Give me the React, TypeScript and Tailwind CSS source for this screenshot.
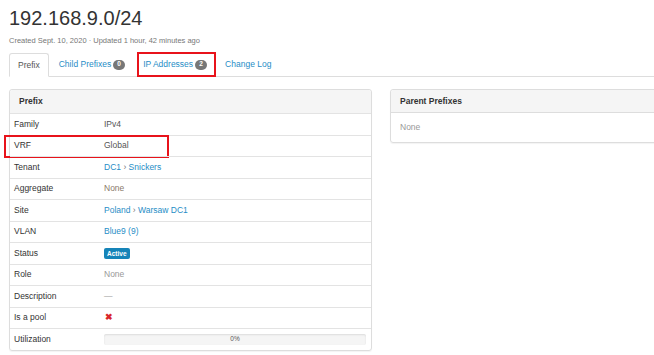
import React from 'react'

const link = 'text-[#1f8dc6]'

function Badge({ n }: { n: number }) {
    return (
        <span className="ml-[2px] inline-flex h-[10px] min-w-[12px] items-center justify-center rounded-full bg-[#777] px-[3px] text-[6.5px] font-bold leading-none text-white">
            {n}
        </span>
    )
}

function Row({ label, children, mark }: { label: string; children: React.ReactNode; mark?: boolean }) {
    return (
        <div className="relative flex h-[21.5px] items-center border-t border-[#e3e3e3] text-[8.5px]">
            <div className="w-[94px] pl-[4px] text-[#333]">{label}</div>
            <div className="flex-1 pr-[5px]">{children}</div>
            {mark && (
                <div className="absolute left-[-6px] top-[-1px] h-[23px] w-[165px] border-2 border-[#e8131b]" />
            )}
        </div>
    )
}

export default function App() {
    return (
        <div className="h-[355px] w-[654px] overflow-hidden bg-white font-['Liberation_Sans',Arial,sans-serif] text-[#333]">
            <div className="w-[760px] pl-[9px]">
                <h1 className="pt-[7px] text-[20px] leading-[22px] text-[#333]">192.168.9.0/24</h1>
                <p className="mt-[7px] text-[7.5px] leading-[9px] text-[#777]">
                    Created Sept. 10, 2020 · Updated 1 hour, 42 minutes ago
                </p>

                <div className="mt-[8px] flex h-[24px] border-b border-[#ddd] text-[8.5px]">
                    <div className="mb-[-1px] flex items-center rounded-t-[3px] border border-b-white border-[#ddd] bg-white px-[8px] text-[#555]">
                        Prefix
                    </div>
                    <div className={`ml-[1px] flex items-center border border-transparent px-[8px] ${link}`}>
                        Child Prefixes <Badge n={0} />
                    </div>
                    <div className={`relative flex items-center border border-transparent px-[8px] ${link}`}>
                        IP Addresses <Badge n={2} />
                        <div className="absolute left-[2px] top-[-2px] h-[25px] right-[-1px] border-2 border-[#e8131b]" />
                    </div>
                    <div className={`flex items-center border border-transparent px-[8px] ${link}`}>Change Log</div>
                </div>

                <div className="mt-[12px] flex items-start gap-[18px]">
                    <div className="w-[363px] shrink-0 rounded-[3px] border border-[#ddd] shadow-[0_1px_1px_rgba(0,0,0,0.05)]">
                        <div className="flex h-[23px] items-center rounded-t-[3px] bg-[#f5f5f5] pl-[9px] text-[8.5px] font-bold text-[#333]">
                            Prefix
                        </div>
                        <Row label="Family">
                            <span className="text-[#555]">IPv4</span>
                        </Row>
                        <Row label="VRF" mark>
                            <span className="text-[#555]">Global</span>
                        </Row>
                        <Row label="Tenant">
                            <span className={link}>DC1</span> <span className="text-[#777]">›</span>{' '}
                            <span className={link}>Snickers</span>
                        </Row>
                        <Row label="Aggregate">
                            <span className="text-[#8a7a6a]">None</span>
                        </Row>
                        <Row label="Site">
                            <span className={link}>Poland</span> <span className="text-[#777]">›</span>{' '}
                            <span className={link}>Warsaw DC1</span>
                        </Row>
                        <Row label="VLAN">
                            <span className={link}>Blue9 (9)</span>
                        </Row>
                        <Row label="Status">
                            <span className="inline-flex h-[11px] items-center rounded-[2px] bg-[#1684b8] px-[3px] text-[6.5px] font-bold text-white">
                                Active
                            </span>
                        </Row>
                        <Row label="Role">
                            <span className="text-[#999]">None</span>
                        </Row>
                        <Row label="Description">
                            <span className="text-[#999]">—</span>
                        </Row>
                        <Row label="Is a pool">
                            <span className="pl-[1px] text-[9px] font-bold text-[#d9262b]">✖</span>
                        </Row>
                        <Row label="Utilization">
                            <div className="flex h-[11px] items-center justify-center rounded-[2px] bg-[#f5f5f5] text-[6.5px] text-[#555] shadow-[inset_0_1px_2px_rgba(0,0,0,0.1)]">
                                0%
                            </div>
                        </Row>
                    </div>

                    <div className="w-[363px] shrink-0 rounded-[3px] border border-[#ddd] shadow-[0_1px_1px_rgba(0,0,0,0.05)]">
                        <div className="flex h-[23px] items-center rounded-t-[3px] border-b border-[#ddd] bg-[#f5f5f5] pl-[9px] text-[8.5px] font-bold text-[#333]">
                            Parent Prefixes
                        </div>
                        <div className="flex h-[29px] items-center pl-[9px] text-[8.5px] text-[#999]">None</div>
                    </div>
                </div>
            </div>
        </div>
    )
}
